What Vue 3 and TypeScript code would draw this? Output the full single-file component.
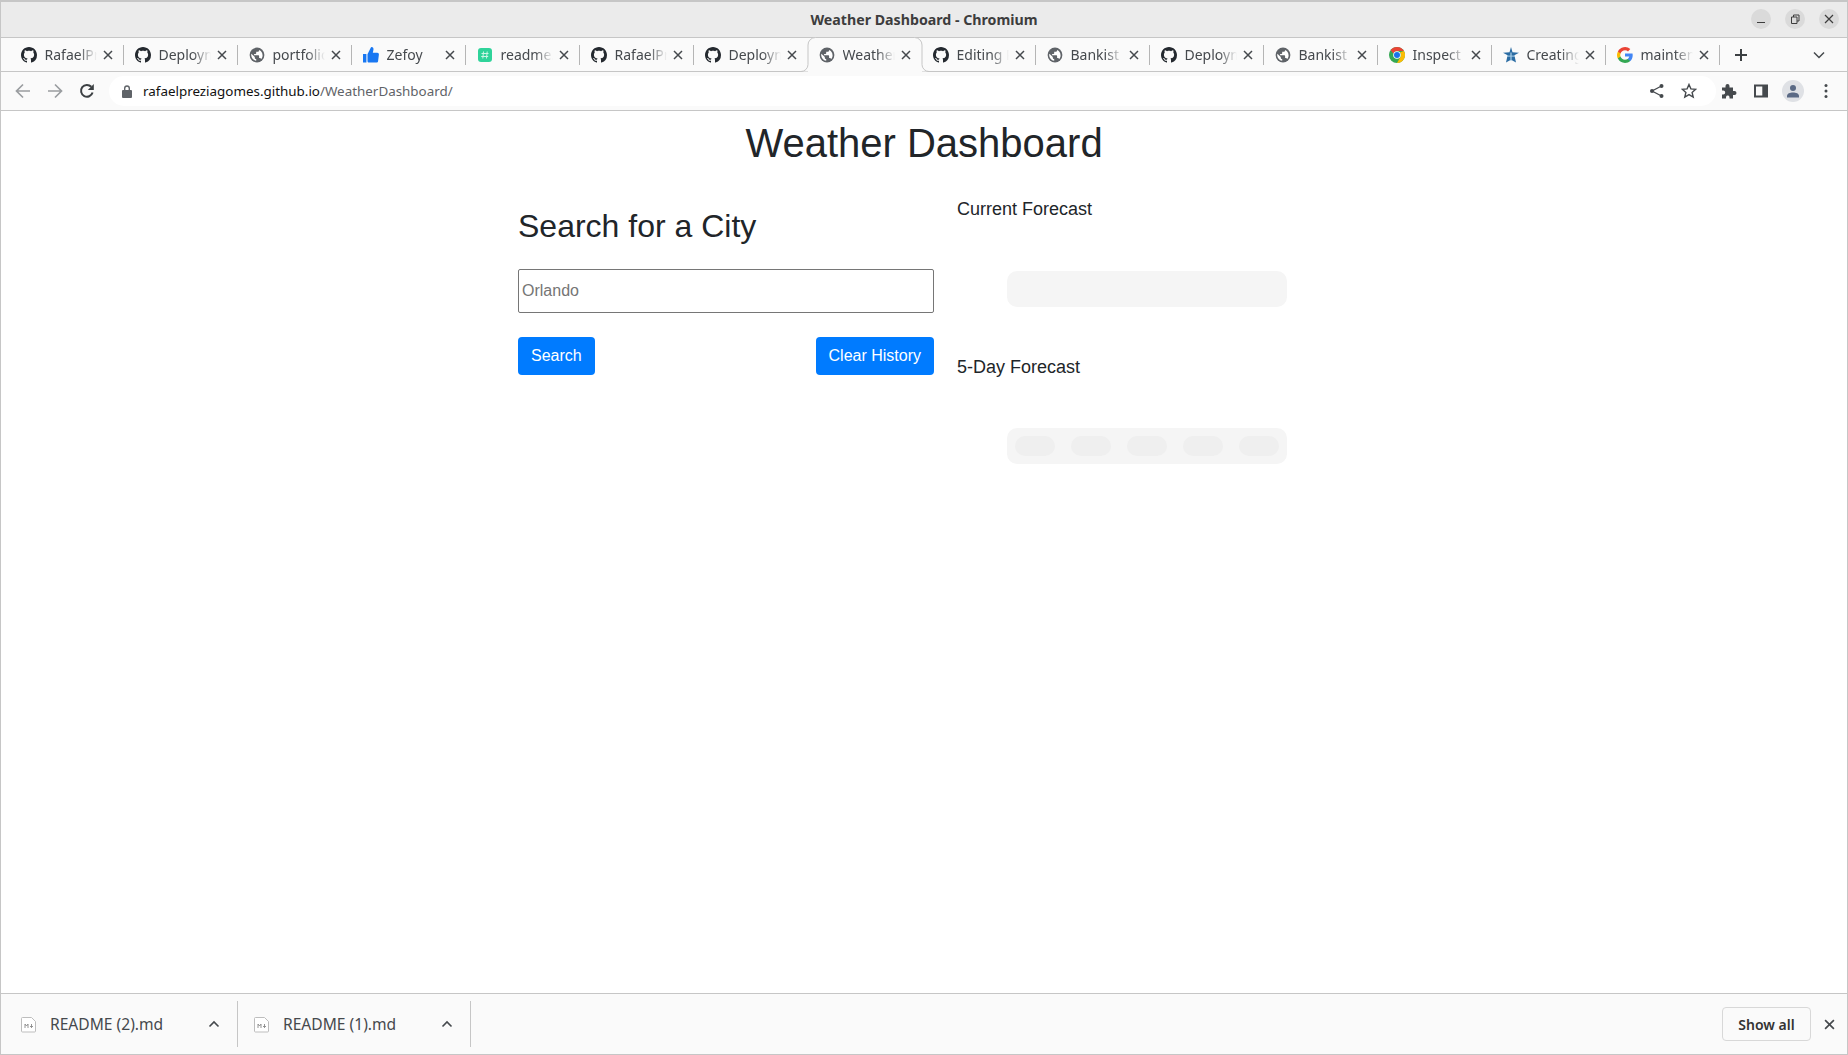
<script setup lang="ts">
interface Tab { title: string; icon: string; active?: boolean }
const tabs: Tab[] = [
  { title: 'RafaelPreziaGomes', icon: 'gh' },
  { title: 'Deployments', icon: 'gh' },
  { title: 'portfolio', icon: 'globe' },
  { title: 'Zefoy', icon: 'thumb' },
  { title: 'readme.so', icon: 'md' },
  { title: 'RafaelPreziaGomes', icon: 'gh' },
  { title: 'Deployments', icon: 'gh' },
  { title: 'Weather Dashboard', icon: 'globe', active: true },
  { title: 'Editing README', icon: 'gh' },
  { title: 'Bankist', icon: 'globe' },
  { title: 'Deployments', icon: 'gh' },
  { title: 'Bankist', icon: 'globe' },
  { title: 'Inspect', icon: 'chrome' },
  { title: 'Creating', icon: 'star' },
  { title: 'maintenance', icon: 'g' },
]
const downloads = ['README (2).md', 'README (1).md']
const pills = [1, 2, 3, 4, 5]
</script>

<template>
  <div class="window">
    <svg class="defs" width="0" height="0" aria-hidden="true">
      <symbol id="gh" viewBox="0 0 16 16">
        <path fill="#24292f" d="M8 0C3.58 0 0 3.58 0 8c0 3.54 2.29 6.53 5.47 7.59.4.07.55-.17.55-.38 0-.19-.01-.82-.01-1.49-2.01.37-2.53-.49-2.69-.94-.09-.23-.48-.94-.82-1.13-.28-.15-.68-.52-.01-.53.63-.01 1.08.58 1.23.82.72 1.21 1.87.87 2.33.66.07-.52.28-.87.51-1.07-1.78-.2-3.64-.89-3.64-3.95 0-.87.31-1.59.82-2.15-.08-.2-.36-1.02.08-2.12 0 0 .67-.21 2.2.82.64-.18 1.32-.27 2-.27s1.36.09 2 .27c1.53-1.04 2.2-.82 2.2-.82.44 1.1.16 1.92.08 2.12.51.56.82 1.27.82 2.15 0 3.07-1.87 3.75-3.65 3.95.29.25.54.73.54 1.48 0 1.07-.01 1.93-.01 2.2 0 .21.15.46.55.38A8.01 8.01 0 0 0 16 8c0-4.42-3.58-8-8-8z" />
      </symbol>
      <symbol id="globe" viewBox="0 0 16 16">
        <circle cx="8" cy="8" r="7.4" fill="#5f6368" />
        <path fill="#fff" d="M7.200 13.800C4.400 13.400 2.200 11 2.200 8c0-.5.1-.9.2-1.300L5.800 10v.7c0 .8.6 1.400 1.400 1.400v1.700zm4.900-1.800c-.2-.6-.7-1-1.300-1h-.7V9c0-.4-.3-.7-.7-.7H5.100V6.900h1.400c.4 0 .7-.3.7-.7V4.800h1.400c.8 0 1.400-.6 1.400-1.400v-.3c2.100.8 3.600 2.900 3.600 5.300 0 1.500-.6 2.800-1.500 3.600z" />
      </symbol>
      <symbol id="thumb" viewBox="0 0 16 16">
        <path fill="#1877f2" d="M0 7h3.400v8.600H0zM4.500 7.200 7.600 1c.2-.5.6-.9 1.100-.9 1 0 1.800.9 1.800 2 0 .9-.4 2.500-.7 3.600h4.500c1 0 1.700.8 1.600 1.800l-.8 6.500c-.1.9-.8 1.600-1.700 1.600H6.100c-.9 0-1.600-.7-1.600-1.600z" />
      </symbol>
      <symbol id="md" viewBox="0 0 16 16">
        <rect x="1" y="1" width="14" height="14" rx="3" fill="#2fd39a" />
        <path fill="none" stroke="#cdf5e6" stroke-width="1" d="M6.500 4.500 5.800 11.500M10.200 4.500 9.500 11.500M4.500 6.500h7M4.200 9.500h7" />
      </symbol>
      <symbol id="chrome" viewBox="0 0 16 16">
        <circle cx="8" cy="8" r="8" fill="#34a853" />
        <path fill="#ea4335" d="M8 0a8 8 0 0 1 6.930 4H8a4 4 0 0 0-3.700 2.500L1.600 3.200A8 8 0 0 1 8 0z" />
        <path fill="#fbbc04" d="M14.930 4A8 8 0 0 1 8 16l3.450-6A4 4 0 0 0 11 5.300z" />
        <circle cx="8" cy="8" r="3.800" fill="#fff" />
        <circle cx="8" cy="8" r="3" fill="#1a73e8" />
      </symbol>
      <symbol id="star" viewBox="0 0 16 16">
        <path fill="#2b6ca3" d="M8 0l1.500 5.200L16 5.800l-4.600 2.400 1.600 7.300L8.500 13H7.500L3 15.500l1.600-7.300L0 5.800l6.500-.6z" />
        <path fill="#a9cfe8" d="M7.400 5.500h1.200v8.500H7.400z" />
        <path fill="#a9cfe8" d="M4 8.600h8v1H4z" />
      </symbol>
      <symbol id="g" viewBox="0 0 16 16">
        <path fill="#4285f4" d="M15.700 8.200c0-.6-.1-1.100-.2-1.600H8v3h4.300c-.2 1-.8 1.800-1.600 2.400v2h2.600c1.500-1.400 2.400-3.400 2.400-5.800z" />
        <path fill="#34a853" d="M8 16c2.200 0 4-.7 5.300-2l-2.600-2c-.7.500-1.600.8-2.700.8-2.100 0-3.900-1.400-4.500-3.300H.9v2.100A8 8 0 0 0 8 16z" />
        <path fill="#fbbc04" d="M3.500 9.500a4.800 4.800 0 0 1 0-3V4.400H.9a8 8 0 0 0 0 7.200z" />
        <path fill="#ea4335" d="M8 3.200c1.200 0 2.200.4 3 1.200l2.300-2.300A8 8 0 0 0 .9 4.400l2.600 2.100C4.100 4.600 5.900 3.200 8 3.200z" />
      </symbol>
      <symbol id="x" viewBox="0 0 10 10">
        <path stroke="currentColor" stroke-width="1.500" fill="none" d="M1 1l8 8M9 1 1 9" />
      </symbol>
    </svg>

    <header class="titlebar">
      <span class="window-title">Weather Dashboard - Chromium</span>
      <div class="controls">
        <span class="ctl"><svg width="10" height="10" viewBox="0 0 10 10"><path d="M1 8.500h8" stroke="#3d3d3d" stroke-width="1" /></svg></span>
        <span class="ctl"><svg width="10" height="10" viewBox="0 0 10 10"><path d="M1.500 3h5.500v6.500H1.500zM3.500 3V1h5.500v6H7" fill="none" stroke="#3d3d3d" stroke-width="1" /></svg></span>
        <span class="ctl"><svg width="10" height="10" viewBox="0 0 10 10"><path d="M1 1l8 8M9 1 1 9" stroke="#3d3d3d" stroke-width="1.200" fill="none" /></svg></span>
      </div>
    </header>

    <div class="tabstrip">
      <div
        v-for="(t, i) in tabs"
        :key="i"
        class="tab"
        :class="{ active: t.active, 'no-sep': t.active || tabs[i + 1]?.active }"
      >
        <svg v-if="t.active" class="tab-shape" width="130" height="35" viewBox="0 0 130 35">
          <rect x="8" y="30" width="114" height="5" fill="#fafafa" />
          <path d="M0 34.500H1A7 7 0 0 0 8 27.500V8A7.500 7.500 0 0 1 15.500 .5H114.500A7.500 7.500 0 0 1 122 8V27.500A7 7 0 0 0 129 34.500H130" fill="#fafafa" stroke="#c6c6c6" />
        </svg>
        <svg class="favicon" width="16" height="16"><use :href="'#' + t.icon" /></svg>
        <span class="tab-title">{{ t.title }}</span>
        <svg class="tab-close" width="10" height="10"><use href="#x" /></svg>
      </div>
      <svg class="newtab" width="14" height="14" viewBox="0 0 14 14"><path d="M7 1v12M1 7h12" stroke="#3c4043" stroke-width="2" /></svg>
      <svg class="tabsearch" width="12" height="8" viewBox="0 0 12 8"><path d="M1 1.500l5 5 5-5" fill="none" stroke="#45494d" stroke-width="1.500" /></svg>
    </div>

    <nav class="toolbar">
      <svg class="tool dim back" width="16" height="16" viewBox="0 0 16 16"><path d="M15 8H2M8 1.500 1.500 8 8 14.500" fill="none" stroke="currentColor" stroke-width="1.700" /></svg>
      <svg class="tool dim fwd" width="16" height="16" viewBox="0 0 16 16"><path d="M1 8h13M8 1.500 14.500 8 8 14.500" fill="none" stroke="currentColor" stroke-width="1.700" /></svg>
      <svg class="tool reload" width="16" height="16" viewBox="0 0 16 16"><path d="M13.600 9.500A5.900 5.900 0 1 1 12.300 3.800" fill="none" stroke="currentColor" stroke-width="2" /><path d="M14.800 1v6h-6z" fill="currentColor" /></svg>
      <div class="omnibox">
        <svg class="lock" width="10" height="13" viewBox="0 0 10 13"><path fill="#5f6368" d="M1 5h8a1 1 0 0 1 1 1v6a1 1 0 0 1-1 1H1a1 1 0 0 1-1-1V6a1 1 0 0 1 1-1z" /><path fill="none" stroke="#5f6368" stroke-width="1.400" d="M2.700 5V3.300a2.300 2.300 0 0 1 4.600 0V5" /></svg>
        <span class="url"><b>rafaelpreziagomes.github.io</b>/WeatherDashboard/</span>
        <svg class="omni-share" width="16" height="16" viewBox="0 0 16 16"><circle cx="12.500" cy="3" r="2" fill="#45494d" /><circle cx="12.500" cy="13" r="2" fill="#45494d" /><circle cx="3" cy="8" r="2" fill="#45494d" /><path d="M12.500 3 3 8l9.500 5" fill="none" stroke="#45494d" stroke-width="1.300" /></svg>
        <svg class="omni-star" width="16" height="16" viewBox="0 0 16 16"><path d="M8 1.500l1.900 4.400 4.800.4-3.600 3.100 1.100 4.700L8 11.600l-4.200 2.500 1.100-4.700L1.300 6.300l4.800-.4z" fill="none" stroke="#45494d" stroke-width="1.400" /></svg>
      </div>
      <svg class="tool puzzle" width="16" height="16" viewBox="0 0 16 16"><path fill="#45494d" d="M1 4.500h3.500V3a2 2 0 0 1 4 0v1.500H12v3.500h1.500a2 2 0 0 1 0 4H12v3.500H8.500V14a1.800 1.800 0 0 0-3.500 0v1.500H1V11.500h1.200a2 2 0 0 0 0-4H1z" /></svg>
      <svg class="tool panel" width="16" height="16" viewBox="0 0 16 16"><path fill-rule="evenodd" fill="#45494d" d="M1 1.500h14v13H1zM3 3.500v9h6.300v-9z" /></svg>
      <span class="avatar"><svg width="14" height="14" viewBox="0 0 14 14"><circle cx="7" cy="4" r="3" fill="#5b6a85" /><path fill="#5b6a85" d="M1 13.500v-1.500c0-2.400 3-3.500 6-3.500s6 1.100 6 3.500v1.500z" /></svg></span>
      <svg class="tool menu" width="4" height="16" viewBox="0 0 4 16"><circle cx="2" cy="2.500" r="1.500" fill="#45494d" /><circle cx="2" cy="8" r="1.500" fill="#45494d" /><circle cx="2" cy="13.500" r="1.500" fill="#45494d" /></svg>
    </nav>

    <main class="page">
      <h1>Weather Dashboard</h1>
      <div class="columns">
        <section class="search">
          <h2>Search for a City</h2>
          <input class="city" type="text" placeholder="Orlando" />
          <div class="actions">
            <button type="button">Search</button>
            <button type="button">Clear History</button>
          </div>
        </section>
        <section class="forecast">
          <h5>Current Forecast</h5>
          <div class="slot"></div>
          <h5 class="second">5-Day Forecast</h5>
          <div class="slot five">
            <span v-for="p in pills" :key="p" class="pill"></span>
          </div>
        </section>
      </div>
    </main>

    <footer class="downloads">
      <div v-for="d in downloads" :key="d" class="dl">
        <svg class="dl-file" width="16" height="17" viewBox="0 0 16 17">
          <path d="M1.500 1.500h9l4 4v9.500a1 1 0 0 1-1 1h-12a1 1 0 0 1-1-1V2.500a1 1 0 0 1 1-1z" fill="#fff" stroke="#bdbdbd" />
          <path d="M4 12V8l1.500 2L7 8v4M10.500 8v4M9 10.500h3" fill="none" stroke="#8a8a8a" stroke-width=".9" />
        </svg>
        <span class="dl-name">{{ d }}</span>
        <svg class="dl-chev" width="12" height="8" viewBox="0 0 12 8"><path d="M1.500 6.500 6 2l4.500 4.500" fill="none" stroke="#45494d" stroke-width="1.600" /></svg>
      </div>
      <button type="button" class="showall">Show all</button>
      <svg class="dl-close" width="11" height="11" viewBox="0 0 10 10"><path d="M1 1l8 8M9 1 1 9" stroke="#45494d" stroke-width="1.500" fill="none" /></svg>
    </footer>
  </div>
</template>

<style>
html, body { margin: 0; background: #fff; }
</style>

<style scoped>
.window {
  box-sizing: border-box;
  width: 1848px;
  height: 1055px;
  display: flex;
  flex-direction: column;
  overflow: hidden;
  border: 1px solid #c6c6c6;
  border-top-width: 2px;
  background: #fff;
  font-family: "Noto Sans", sans-serif;
}
.defs { position: absolute; }

.titlebar {
  flex: 0 0 35px;
  position: relative;
  display: flex;
  align-items: center;
  justify-content: center;
  background: #ebebeb;
  border-bottom: 1px solid #c6c6c6;
}
.window-title { font-size: 14.200px; font-weight: 700; color: #3d3d3d; }
.controls {
  position: absolute;
  right: 0;
  top: 7px;
  display: flex;
  gap: 14px;
  padding-right: 8px;
}
.ctl {
  width: 20px;
  height: 20px;
  border-radius: 50%;
  background: #dadada;
  display: flex;
  align-items: center;
  justify-content: center;
}

.tabstrip {
  flex: 0 0 33px;
  display: flex;
  align-items: center;
  padding-left: 8.500px;
  background: #fafafa;
  border-bottom: 1px solid #c6c6c6;
  position: relative;
}
.tab {
  flex: 0 0 114px;
  box-sizing: border-box;
  height: 33px;
  display: flex;
  align-items: center;
  padding-left: 11px;
  position: relative;
  color: #45494d;
}
.tab::after {
  content: "";
  position: absolute;
  right: 0;
  top: 7px;
  height: 20px;
  width: 1px;
  background: #b5b5b5;
}
.tab.no-sep::after { display: none; }
.tab.active { z-index: 1; }
.tab-shape { position: absolute; left: -8px; top: -1px; }
.favicon { flex: none; position: relative; }
.tab-title {
  position: relative;
  margin-left: 8px;
  width: 52px;
  flex: none;
  overflow: hidden;
  white-space: nowrap;
  font-size: 14px;
  -webkit-mask-image: linear-gradient(to right, #000 65%, transparent 100%);
  mask-image: linear-gradient(to right, #000 65%, transparent 100%);
}
.tab-close { flex: none; position: relative; margin-left: 6px; color: #45494d; }
.newtab { margin-left: 14px; }
.tabsearch { position: absolute; right: 22px; top: 13px; }

.toolbar {
  flex: 0 0 38px;
  display: flex;
  align-items: center;
  background: #fafafa;
  border-bottom: 1px solid #c6c6c6;
  color: #45494d;
}
.tool { flex: none; }
.dim { color: #9a9da0; }
.back { margin-left: 14px; }
.fwd { margin-left: 16px; }
.reload { margin-left: 16px; color: #3c4043; }
.omnibox {
  flex: none;
  width: 1607px;
  box-sizing: border-box;
  height: 30px;
  margin-left: 14px;
  border-radius: 15px;
  background: #fff;
  display: flex;
  align-items: center;
  padding-left: 13px;
}
.url { margin-left: 11px; font-size: 13.400px; color: #5f6368; flex: 1; white-space: nowrap; }
.url b { font-weight: 400; color: #111; }
.omni-star { margin-left: 16px; margin-right: 19px; }
.puzzle { margin-left: 5px; }
.panel { margin-left: 16px; }
.avatar {
  flex: none;
  margin-left: 13px;
  width: 22px;
  height: 22px;
  border-radius: 50%;
  background: #dfe1e5;
  display: flex;
  align-items: center;
  justify-content: center;
}
.menu { margin-left: 20px; }

.page {
  flex: 1;
  min-height: 0;
  font-family: "Liberation Sans", Arial, sans-serif;
  color: #212529;
  background: #fff;
}
h1 {
  margin: 8px 0 0;
  font-size: 40px;
  line-height: 48px;
  text-align: center;
  font-weight: 400;
}
.columns {
  display: flex;
  width: 812px;
  margin: 20px auto 0;
  gap: 23px;
}
.search { flex: 0 0 416px; }
h2 {
  margin: 20px 0 0;
  font-size: 32px;
  line-height: 38px;
  font-weight: 400;
}
.city {
  display: block;
  box-sizing: border-box;
  width: 416px;
  height: 44px;
  margin-top: 24px;
  padding: 0 3px;
  border: 1px solid #767676;
  border-radius: 2px;
  font: 16px "Liberation Sans", Arial, sans-serif;
  outline: none;
}
.city::placeholder { color: #757575; }
.actions { display: flex; justify-content: space-between; margin-top: 24px; }
.actions button {
  height: 38px;
  padding: 0 13px;
  background: #007bff;
  color: #fff;
  border: none;
  border-radius: 4px;
  font: 16px "Liberation Sans", Arial, sans-serif;
}
.forecast { flex: 1; padding-top: 11px; }
h5 {
  margin: 0;
  font-size: 18px;
  line-height: 22px;
  font-weight: 400;
}
.second { margin-top: 49px; }
.slot {
  box-sizing: border-box;
  width: 280px;
  height: 36px;
  margin: 51px 0 0 50px;
  padding: 8px;
  border-radius: 10px;
  background: #f5f5f5;
  display: flex;
  gap: 16px;
}
.slot.five { margin-top: 50px; }
.pill { width: 40px; height: 20px; border-radius: 10px; background: #efefef; }

.downloads {
  flex: 0 0 60px;
  display: flex;
  align-items: center;
  padding-left: 4px;
  background: #fafafa;
  border-top: 1px solid #c6c6c6;
}
.dl {
  flex: 0 0 233px;
  box-sizing: border-box;
  height: 46px;
  display: flex;
  align-items: center;
  padding-left: 16px;
  border-right: 1px solid #c6c6c6;
}
.dl-name { margin-left: 13px; flex: 1; font-size: 15.600px; color: #45494d; white-space: nowrap; }
.dl-chev { margin-right: 17px; }
.showall {
  margin-left: auto;
  width: 89px;
  height: 34px;
  box-sizing: border-box;
  background: #fafafa;
  border: 1px solid #d8d8d8;
  border-radius: 4px;
  font: 600 14px "Noto Sans", sans-serif;
  color: #333;
  padding: 0;
}
.dl-close { margin-left: 13px; margin-right: 12px; }
</style>
